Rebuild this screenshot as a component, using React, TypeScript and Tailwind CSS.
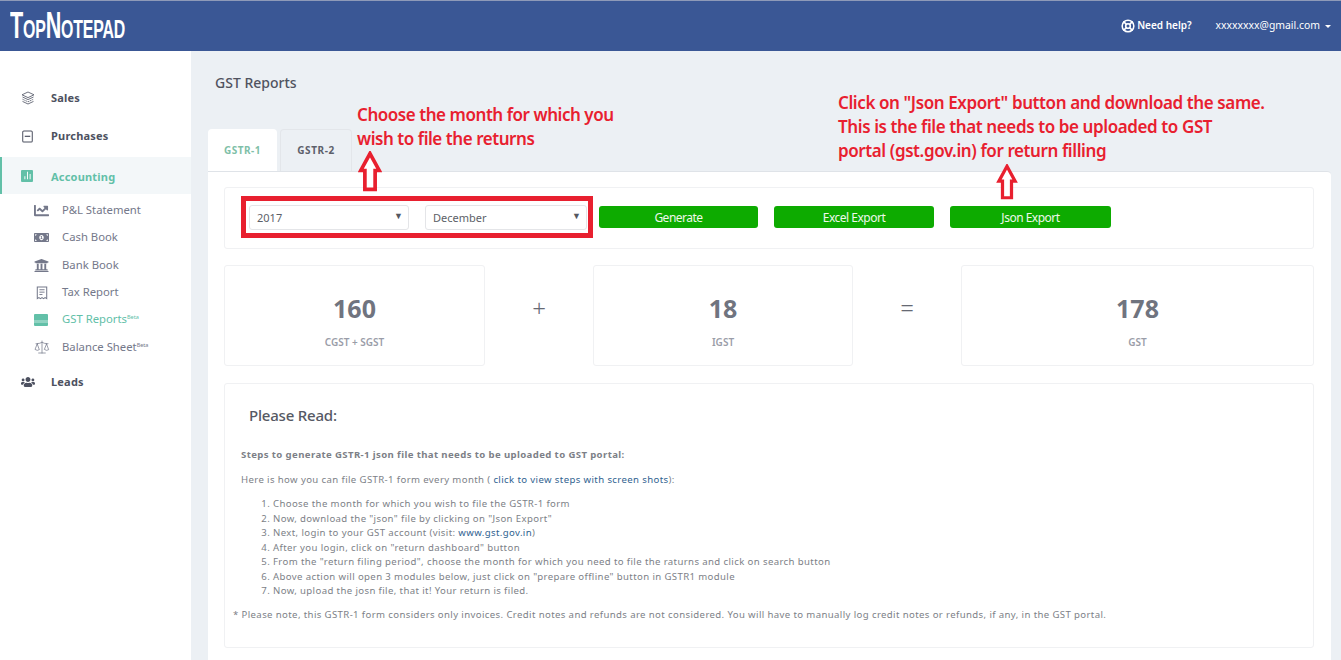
import React from "react";
import { LifeBuoy, ChartNoAxesColumn, Scale } from "lucide-react";
import { FaChartLine, FaMoneyBillAlt, FaUniversity, FaUsers } from "react-icons/fa";

const Up = ({ className }: { className: string }) => (
  <svg viewBox="0 0 22 40" className={className}>
    <path d="M11 2.5 L20 19 L16 19 L16 37.5 L6 37.5 L6 19 L2 19 Z" fill="#fff" stroke="#e8202f" strokeWidth="3.6" />
  </svg>
);

const Stack = () => (
  <svg viewBox="0 0 14 14" width="14" height="14" fill="none" stroke="#5f6372" strokeWidth="0.9">
    <path d="M7 1 L13 3.8 L7 6.6 L1 3.8 Z" />
    <path d="M1.5 6 L7 8.6 L12.5 6" />
    <path d="M1.5 8.2 L7 10.8 L12.5 8.2" strokeDasharray="1.4 0.6" />
    <path d="M1.5 10.4 L7 13 L12.5 10.4" />
  </svg>
);

const Minus = () => (
  <svg viewBox="0 0 12 14" width="11" height="13" fill="none" stroke="#4d5160" strokeWidth="1.1">
    <rect x="0.8" y="1" width="10.4" height="12" rx="1.2" />
    <path d="M3 6.8 H9" strokeWidth="1.3" />
  </svg>
);

const Bill = () => (
  <svg viewBox="0 0 14 16" width="12" height="14" fill="none" stroke="#74788a" strokeWidth="1.2">
    <path d="M1.5 1 H12.5 V14.5 L10.6 13.4 L8.8 14.5 L7 13.4 L5.2 14.5 L3.4 13.4 L1.5 14.5 Z" />
    <path d="M4 4.2 H10 M4 7 H10 M4 9.8 H7.5" strokeWidth="1.1" />
  </svg>
);

const Sub = ({ icon, label, beta, active }: { icon: React.ReactNode; label: string; beta?: boolean; active?: boolean }) => (
  <div className={`flex h-[27.3px] items-center pl-[34px] text-[11.3px] ${active ? "text-[#62c0a8]" : "text-[#74788a]"}`}>
    <span className="flex w-[28px] shrink-0 items-center">{icon}</span>
    <span>{label}</span>
    {beta && <span className="-mt-[5px] text-[5.5px]">Beta</span>}
  </div>
);

const Main = ({ icon, label, className }: { icon: React.ReactNode; label: string; className: string }) => (
  <div className={`flex items-center pl-[21px] text-[11px] font-bold tracking-[0.2px] text-[#4d5160] ${className}`}>
    <span className="flex w-[30px] shrink-0 items-center">{icon}</span>
    <span>{label}</span>
  </div>
);

const Stat = ({ n, label, className }: { n: string; label: string; className: string }) => (
  <div className={`flex h-[101px] flex-col items-center rounded-[3px] border border-[#f0f1f3] pt-[25px] ${className}`}>
    <div className="text-[25px] font-bold leading-[34px] text-[#70747f]">{n}</div>
    <div className="mt-[10px] text-[10px] font-semibold text-[#9a9da8]">{label}</div>
  </div>
);

const Btn = ({ label, className }: { label: string; className: string }) => (
  <div className={`flex h-[22px] items-center justify-center rounded-[3px] bg-[#0dab00] pt-[2px] text-[12px] tracking-[-0.5px] text-[#eef8ec] ${className}`}>{label}</div>
);

const Sel = ({ label, className }: { label: string; className: string }) => (
  <div className={`flex h-[25px] items-center justify-between rounded-[3px] border border-[#e4e5e8] bg-white pl-[7px] pr-[5px] text-[11px] text-[#5d5f68] ${className}`}>
    <span className="pt-[3px]">{label}</span>
    <span className="mb-[3px] text-[9px] text-[#55575f]">▼</span>
  </div>
);

const steps = [
  <>Choose the month for which you wish to file the GSTR-1 form</>,
  <>Now, download the "json" file by clicking on "Json Export"</>,
  <>Next, login to your GST account (visit: <span className="text-[#2f6290]">www.gst.gov.in</span>)</>,
  <>After you login, click on "return dashboard" button</>,
  <>From the "return filing period", choose the month for which you need to file the raturns and click on search button</>,
  <>Above action will open 3 modules below, just click on "prepare offline" button in GSTR1 module</>,
  <>Now, upload the josn file, that it! Your return is filed.</>,
];

export default function App() {
  return (
    <div className="h-[660px] w-[1341px] overflow-hidden bg-[#ecf0f4] font-['Noto_Sans','Open_Sans',sans-serif]">
      <header className="flex h-[51px] items-center justify-between border-t border-[#8e9ab8] bg-[#3a5795] pl-[10px] pr-[10px] text-white">
        <div className="flex origin-left scale-x-[0.6] items-baseline font-['Liberation_Sans',sans-serif] font-bold leading-none tracking-[-0.3px] whitespace-nowrap">
          <span className="text-[36px]">T</span><span className="text-[26.5px]">OP</span><span className="text-[36px]">N</span><span className="text-[26.5px]">OTEPAD</span>
        </div>
        <div className="flex items-center text-[10px]">
          <LifeBuoy size={14} strokeWidth={2.6} className="mr-[2px]" />
          <span className="font-semibold">Need help?</span>
          <span className="ml-[24px] text-[10.4px]">xxxxxxxx@gmail.com</span>
          <span className="ml-[5px] mt-[1px] h-0 w-0 border-x-[3px] border-t-[3px] border-x-transparent border-t-white" />
        </div>
      </header>
      <div className="flex h-[609px]">
        <aside className="w-[191px] shrink-0 bg-white pt-[30px]">
          <Main className="h-[34px]" icon={<Stack />} label="Sales" />
          <Main className="mt-[2px] h-[38px]" icon={<span className="pl-[1px]"><Minus /></span>} label="Purchases" />
          <div className="mt-[2px] flex h-[37px] items-center border-l-2 border-[#62c0a8] bg-[#f3f7f9] pl-[19px] pt-[3px] text-[11px] font-bold tracking-[0.2px] text-[#62c0a8]">
            <span className="flex w-[30px] shrink-0"><span className="-mt-[3px] flex h-[12px] w-[12px] items-center justify-center rounded-[1px] bg-[#62c0a8]"><ChartNoAxesColumn size={9} color="#fff" strokeWidth={2.5} /></span></span>
            <span>Accounting</span>
          </div>
          <div className="pt-[3px]">
            <Sub icon={<FaChartLine size={15} />} label="P&L Statement" />
            <Sub icon={<FaMoneyBillAlt size={15} />} label="Cash Book" />
            <Sub icon={<FaUniversity size={15} />} label="Bank Book" />
            <Sub icon={<span className="pl-[2px]"><Bill /></span>} label="Tax Report" />
            <Sub active beta icon={<span className="flex h-[12px] w-[14px] items-center rounded-[1px] bg-[#62c0a8] pt-[3px]"><span className="h-[3px] w-full bg-white/30" /></span>} label="GST Reports" />
            <Sub beta icon={<Scale size={16} strokeWidth={1.1} />} label="Balance Sheet" />
          </div>
          <Main className="mt-[6px] h-[30px]" icon={<FaUsers size={14} />} label="Leads" />
        </aside>
        <main className="relative min-w-0 flex-1 pl-[17px] pr-[10px]">
          <h1 className="pl-[7px] pt-[22px] text-[14px] font-medium leading-[20px] text-[#50535f]">GST Reports</h1>
          <div className="mt-[36px] flex h-[42px] gap-[3px]">
            <div className="flex w-[69px] items-center justify-center rounded-t-[4px] bg-white text-[10px] font-bold tracking-[0.5px] text-[#7fbfa8]">GSTR-1</div>
            <div className="flex w-[72px] items-center justify-center rounded-t-[4px] border border-b-0 border-[#e3e6ea] text-[10px] font-bold tracking-[0.6px] text-[#5d606b]">GSTR-2</div>
          </div>
          <section className="h-[500px] rounded-tr-[4px] border-t border-[#dfe3e8] bg-white pl-[16px] pr-[17px] pt-[15px]">
            <div className="flex h-[62px] items-center rounded-[3px] border border-[#f0f1f3] pb-[2px] pl-[24px]">
              <Sel label="2017" className="w-[160px]" />
              <Sel label="December" className="ml-[16px] w-[162px]" />
              <Btn label="Generate" className="ml-[12px] w-[159px]" />
              <Btn label="Excel Export" className="ml-[16px] w-[160px]" />
              <Btn label="Json Export" className="ml-[16px] w-[161px]" />
            </div>
            <div className="mt-[16px] flex items-center">
              <Stat n="160" label="CGST + SGST" className="w-[261px]" />
              <div className="w-[108px] pb-[16px] text-center text-[24px] font-light text-[#666973]">+</div>
              <Stat n="18" label="IGST" className="w-[260px]" />
              <div className="w-[108px] pb-[16px] text-center text-[24px] font-light text-[#666973]">=</div>
              <Stat n="178" label="GST" className="w-[353px]" />
            </div>
            <div className="mt-[17px] h-[265px] rounded-[3px] border border-[#f0f1f3] pl-[16px] pt-[20px] text-[9.6px] leading-[14.5px] tracking-[0.38px] text-[#7d7f87]">
              <h2 className="pl-[8px] text-[15px] font-medium leading-[22px] tracking-[-0.2px] text-[#565964]">Please Read:</h2>
              <p className="mt-[22px] font-bold">Steps to generate GSTR-1 json file that needs to be uploaded to GST portal:</p>
              <p className="mt-[10px]">Here is how you can file GSTR-1 form every month ( <span className="text-[#2f6290]">click to view steps with screen shots</span>):</p>
              <ol className="mt-[10px] list-decimal pl-[32px]">
                {steps.map((s, i) => <li key={i}>{s}</li>)}
              </ol>
              <p className="ml-[-8px] mt-[9px]">* Please note, this GSTR-1 form considers only invoices. Credit notes and refunds are not considered. You will have to manually log credit notes or refunds, if any, in the GST portal.</p>
            </div>
          </section>
          <div className="absolute left-[166px] top-[52px] text-[17px] font-semibold leading-[24px] tracking-[-0.45px] text-[#e8202f]">Choose the month for which you<br />wish to file the returns</div>
          <div className="absolute left-[647px] top-[40px] text-[17px] font-semibold leading-[24px] tracking-[-0.4px] text-[#e8202f]">Click on "Json Export" button and download the same.<br />This is the file that needs to be uploaded to GST<br />portal (gst.gov.in) for return filling</div>
          <div className="absolute left-[50px] top-[145px] h-[42px] w-[352px] border-[5px] border-[#e8202f]" />
          <Up className="absolute left-[167px] top-[100px] h-[41px] w-[24px]" />
          <Up className="absolute left-[805px] top-[113px] h-[36px] w-[22px]" />
        </main>
      </div>
    </div>
  );
}
